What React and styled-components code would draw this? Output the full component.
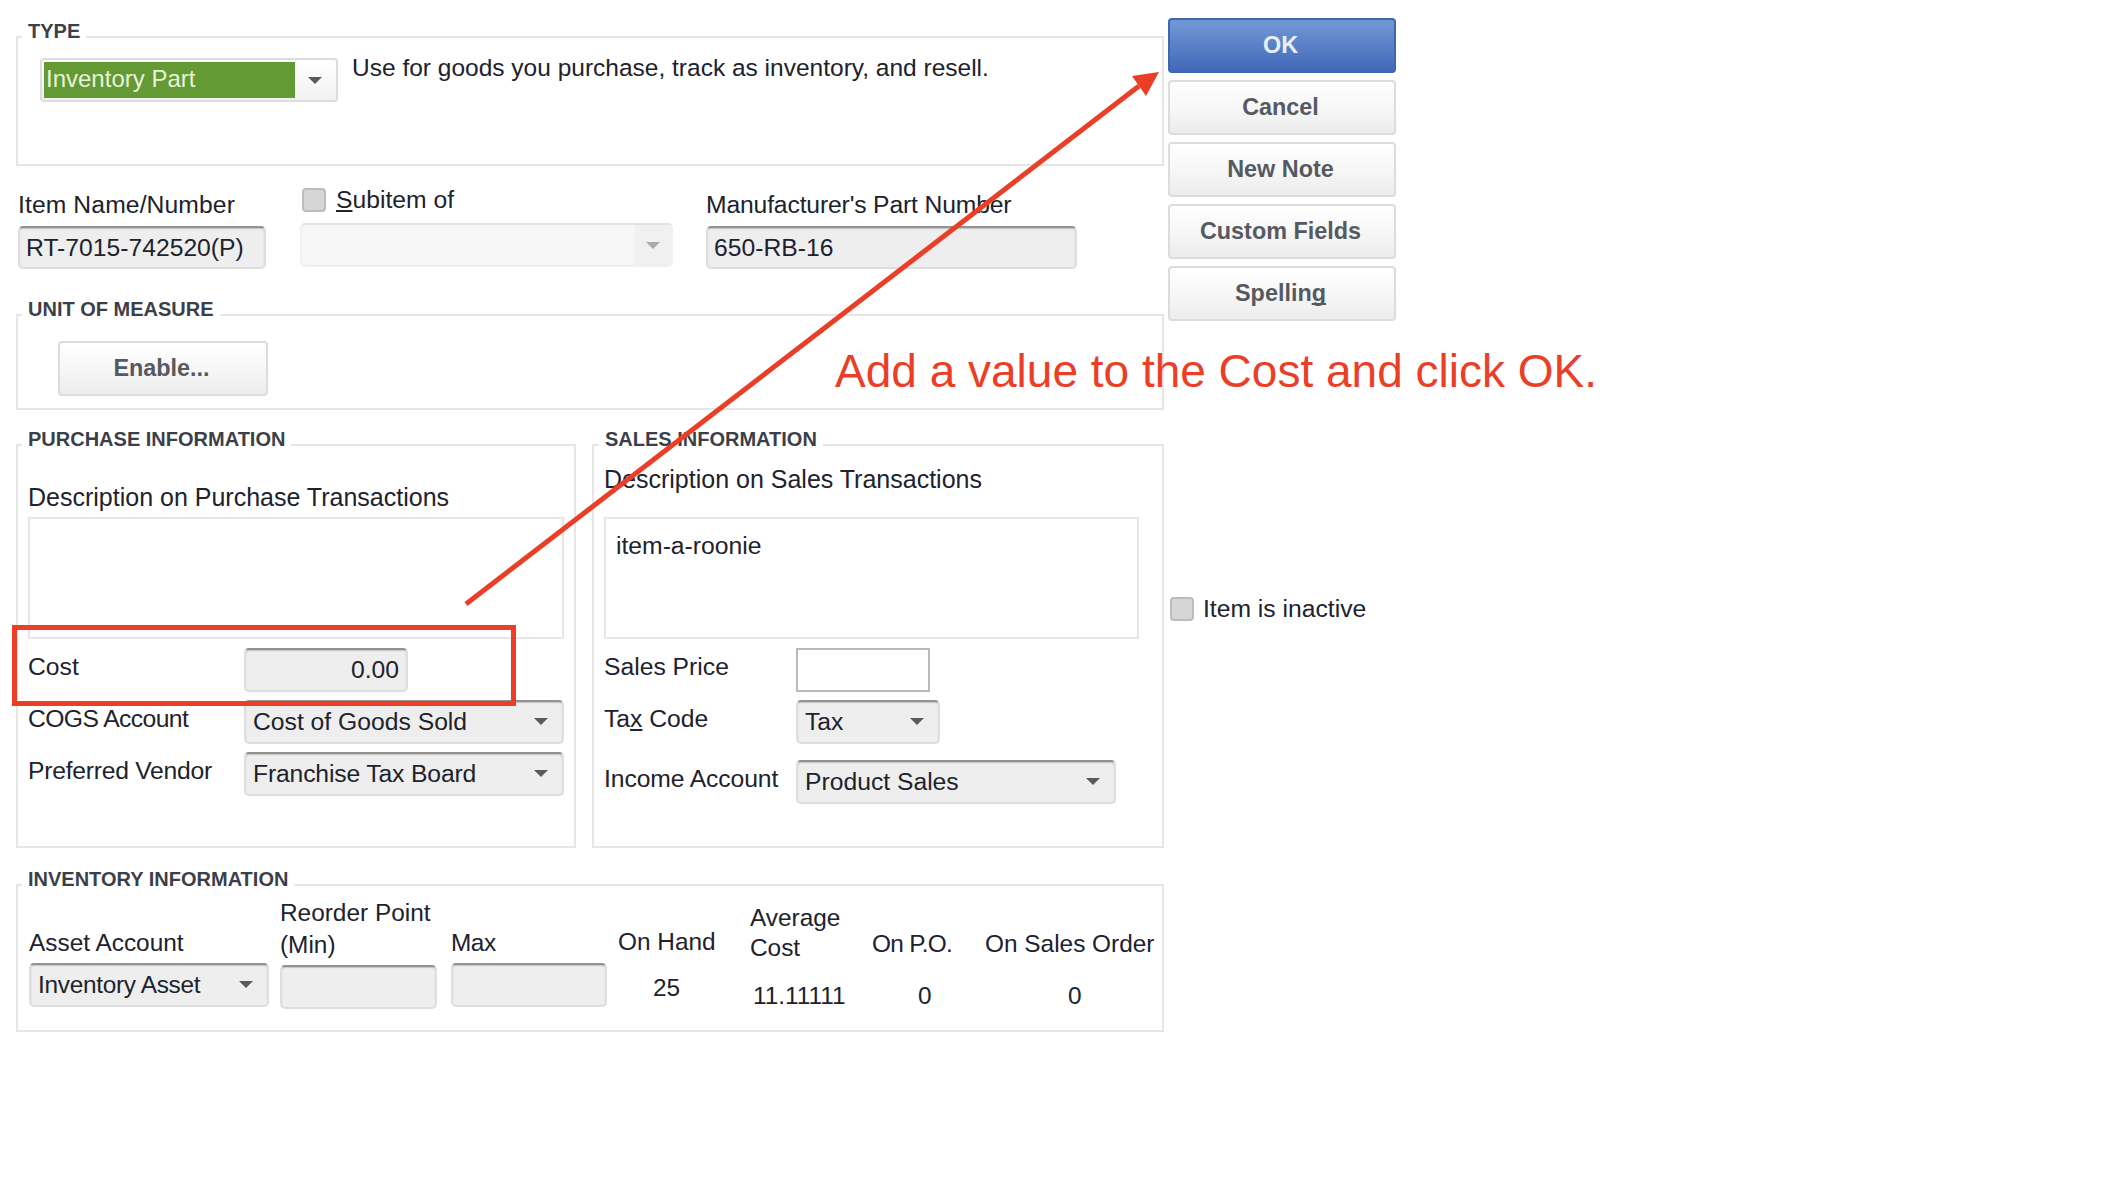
import styled, { createGlobalStyle } from "styled-components";

const GlobalStyle = createGlobalStyle`
  html, body {
    margin: 0;
    background: #ffffff;
  }
  body {
    font-family: "Liberation Sans", Arial, sans-serif;
    font-size: 24.7px;
    color: #20222c;
  }
`;

const ITEM_BUTTONS = [
  { label: "Cancel" },
  { label: "New Note" },
  { label: "Custom Fields" },
  { label: "Spelling", underlineLast: true },
];

export default function App() {
  return (
    <Page>
      <GlobalStyle />

      <FormColumn>
        <Group $height={145}>
          <GroupTitle>TYPE</GroupTitle>
          <TypeRow>
            <TypeSelect>
              <TypeValue>Inventory Part</TypeValue>
              <TypeArrowCell>
                <Arrow />
              </TypeArrowCell>
            </TypeSelect>
            <TypeHint>Use for goods you purchase, track as inventory, and resell.</TypeHint>
          </TypeRow>
        </Group>

        <ItemRow>
          <Field $top={4} $gap={8}>
            <Label $ls={0.1}>Item Name/Number</Label>
            <Sunken $w={248} $h={43}>RT-7015-742520(P)</Sunken>
          </Field>
          <Field $gap={11}>
            <CheckRow>
              <Check />
              <Label>
                <U>S</U>ubitem of
              </Label>
            </CheckRow>
            <DisabledSelect>
              <DisabledArrowCell>
                <Arrow $muted />
              </DisabledArrowCell>
            </DisabledSelect>
          </Field>
          <Field $top={4} $gap={8}>
            <Label $ls={-0.15}>Manufacturer's Part Number</Label>
            <Sunken $w={371} $h={43}>650-RB-16</Sunken>
          </Field>
        </ItemRow>

        <Group $height={111} $mt={30}>
          <GroupTitle>UNIT OF MEASURE</GroupTitle>
          <UnitBody>
            <PlainButton $w={210}>Enable...</PlainButton>
          </UnitBody>
        </Group>

        <InfoRow>
          <Group $height={419} $width={560}>
            <GroupTitle>PURCHASE INFORMATION</GroupTitle>
            <InfoBody>
              <DescLabel $top={23} $bottom={7}>Description on Purchase Transactions</DescLabel>
              <DescBox />
              <FormRow $mt={9}>
                <RowLabel $w={216}>Cost</RowLabel>
                <Sunken $w={164} $h={44} $right>0.00</Sunken>
              </FormRow>
              <FormRow $mt={8}>
                <RowLabel $w={216} $ls={-0.6}>COGS Account</RowLabel>
                <Select $w={320}>
                  Cost of Goods Sold
                  <Arrow />
                </Select>
              </FormRow>
              <FormRow $mt={8}>
                <RowLabel $w={216} $ls={-0.25}>Preferred Vendor</RowLabel>
                <Select $w={320}>
                  <SelectText $ls={-0.15}>Franchise Tax Board</SelectText>
                  <Arrow />
                </Select>
              </FormRow>
            </InfoBody>
          </Group>

          <Group $height={419} $width={572} $ml={1}>
            <GroupTitle $ml={5}>SALES INFORMATION</GroupTitle>
            <InfoBody>
              <DescLabel $top={5} $bottom={25}>Description on Sales Transactions</DescLabel>
              <DescBox $w={535}>item-a-roonie</DescBox>
              <FormRow $mt={9}>
                <RowLabel $w={192}>Sales Price</RowLabel>
                <WhiteInput />
              </FormRow>
              <FormRow $mt={8}>
                <RowLabel $w={192}>
                  Ta<U>x</U> Code
                </RowLabel>
                <Select $w={144}>
                  Tax
                  <Arrow />
                </Select>
              </FormRow>
              <FormRow $mt={16}>
                <RowLabel $w={192} $ls={-0.1}>Income Account</RowLabel>
                <Select $w={320}>
                  Product Sales
                  <Arrow />
                </Select>
              </FormRow>
            </InfoBody>
          </Group>
        </InfoRow>

        <Group $height={163} $mt={21}>
          <GroupTitle>INVENTORY INFORMATION</GroupTitle>
          <StockGrid>
            <StockCol $mb={2} $gap={7}>
              <Label>Asset Account</Label>
              <Select $w={240}>
                <SelectText $ls={-0.3}>Inventory Asset</SelectText>
                <Arrow />
              </Select>
            </StockCol>
            <StockCol $gap={4}>
              <TallLabel>
                Reorder Point
                <br />
                (Min)
              </TallLabel>
              <Sunken $w={157} $h={44} />
            </StockCol>
            <StockCol $mb={2} $gap={7}>
              <Label $ls={-0.5}>Max</Label>
              <Sunken $w={156} $h={44} />
            </StockCol>
            <StockCol $mb={8} $gap={20}>
              <Label>On Hand</Label>
              <StockValue $pl={35}>25</StockValue>
            </StockCol>
            <StockCol $gap={20}>
              <TallLabel $lh={30}>
                Average
                <br />
                Cost
              </TallLabel>
              <StockValue $pl={3}>11.11111</StockValue>
            </StockCol>
            <StockCol $gap={26}>
              <Label $ls={-0.7}>On P.O.</Label>
              <StockValue $pl={46}>0</StockValue>
            </StockCol>
            <StockCol $gap={26}>
              <Label>On Sales Order</Label>
              <StockValue $pl={83}>0</StockValue>
            </StockCol>
          </StockGrid>
        </Group>
      </FormColumn>

      <SideColumn>
        <PrimaryButton>OK</PrimaryButton>
        {ITEM_BUTTONS.map((b) => (
          <PlainButton key={b.label}>
            {b.underlineLast ? (
              <>
                {b.label.slice(0, -1)}
                <U>{b.label.slice(-1)}</U>
              </>
            ) : (
              b.label
            )}
          </PlainButton>
        ))}
        <InactiveRow>
          <Check />
          <Label>Item is inactive</Label>
        </InactiveRow>
      </SideColumn>

      {/* callout drawn on top of the dialog */}
      <Callout>Add a value to the Cost and click OK.</Callout>
      <CalloutArt viewBox="0 0 2116 1182" aria-hidden="true">
        <rect x="14.5" y="627.5" width="499" height="76" fill="none" stroke="#ea3f26" strokeWidth="5" />
        <line x1="466" y1="604" x2="1139" y2="86" stroke="#ea3f26" strokeWidth="5" />
        <polygon points="1159,72 1132,76 1146,96" fill="#ea3f26" />
      </CalloutArt>
    </Page>
  );
}

/* ================= styles ================= */

const Page = styled.div`
  position: relative;
  width: 2116px;
  height: 1182px;
  box-sizing: border-box;
  padding: 18px 0 0 16px;
  display: flex;
  gap: 4px;
  overflow: hidden;
`;

const FormColumn = styled.div`
  width: 1148px;
  padding-top: 3px;
  flex: 0 0 auto;
`;

const Group = styled.fieldset`
  box-sizing: border-box;
  margin: ${(p) => p.$mt || 0}px 0 0 ${(p) => p.$ml || 0}px;
  padding: 0;
  min-width: 0;
  height: ${(p) => p.$height}px;
  width: ${(p) => (p.$width ? `${p.$width}px` : "100%")};
  border: 2px solid #e6e6e6;
`;

const GroupTitle = styled.legend`
  margin-left: ${(p) => p.$ml || 4}px;
  padding: 0 6px 12px;
  font-size: 20px;
  line-height: 20px;
  font-weight: 700;
  color: #3c3f48;
`;

const TypeRow = styled.div`
  display: flex;
  padding: 5px 0 0 22px;
  gap: 14px;
`;

const TypeSelect = styled.div`
  box-sizing: border-box;
  width: 298px;
  height: 44px;
  padding: 2px;
  display: flex;
  background: linear-gradient(#ffffff, #f1f1f1);
  border: 2px solid #dddddd;
  border-radius: 4px;
`;

const TypeValue = styled.div`
  width: 251px;
  padding-left: 2px;
  box-sizing: border-box;
  background: #639a33;
  color: #e8f2da;
  font-size: 24px;
  line-height: 34px;
`;

const TypeArrowCell = styled.div`
  flex: 1;
  display: grid;
  place-items: center;
`;

const TypeHint = styled.div`
  line-height: 20px;
  font-size: 24.5px;
`;

const Arrow = styled.span`
  width: 0;
  height: 0;
  flex: 0 0 auto;
  border-left: 7.5px solid transparent;
  border-right: 7.5px solid transparent;
  border-top: 7px solid ${(p) => (p.$muted ? "#a9a9a9" : "#5a5a5a")};
`;

const ItemRow = styled.div`
  display: grid;
  grid-template-columns: 282px 406px 371px;
  padding: 22px 0 0 2px;
`;

const Field = styled.div`
  display: flex;
  flex-direction: column;
  padding-top: ${(p) => p.$top || 0}px;
  gap: ${(p) => p.$gap}px;
`;

const Label = styled.div`
  line-height: 26px;
  white-space: nowrap;
  letter-spacing: ${(p) => p.$ls || 0}px;
`;

const U = styled.span`
  text-decoration: underline;
  text-decoration-skip-ink: none;
`;

const Sunken = styled.div`
  box-sizing: border-box;
  width: ${(p) => p.$w}px;
  height: ${(p) => p.$h}px;
  padding: 0 ${(p) => (p.$right ? 7 : 6)}px;
  background: #eeeeee;
  border: 2px solid #dedede;
  border-top: 2px solid #929292;
  border-radius: 5px;
  box-shadow: inset 0 1px 1px #c4c4c4;
  line-height: 39px;
  text-align: ${(p) => (p.$right ? "right" : "left")};
  white-space: nowrap;
`;

const CheckRow = styled.div`
  display: flex;
  align-items: center;
  gap: 10px;
  padding-left: 2px;
  height: 24px;
`;

const Check = styled.span`
  box-sizing: border-box;
  width: 24px;
  height: 24px;
  flex: 0 0 auto;
  background: #d6d6d6;
  border: 2px solid #bcbcbc;
  border-radius: 4px;
`;

const DisabledSelect = styled.div`
  box-sizing: border-box;
  width: 373px;
  height: 44px;
  display: flex;
  justify-content: flex-end;
  background: #f6f6f6;
  border: 2px solid #f0f0f0;
  border-top-color: #e2e2e2;
  border-radius: 5px;
`;

const DisabledArrowCell = styled.div`
  width: 36px;
  display: grid;
  place-items: center;
  background: #f0f0f0;
`;

const UnitBody = styled.div`
  padding: 10px 0 0 40px;
`;

const PlainButton = styled.div`
  box-sizing: border-box;
  width: ${(p) => (p.$w ? `${p.$w}px` : "100%")};
  height: 55px;
  padding-right: 3px;
  display: flex;
  align-items: center;
  justify-content: center;
  background: linear-gradient(#ffffff, #f6f6f6 55%, #ececec);
  border: 2px solid #dcdcdc;
  border-radius: 4px;
  color: #565a60;
  font-size: 23.4px;
  font-weight: 700;
`;

const PrimaryButton = styled(PlainButton)`
  background: linear-gradient(#7299d6, #4268b9);
  border-color: #3f66ae;
  color: #e9eff8;
`;

const InfoRow = styled.div`
  display: flex;
  gap: 15px;
  margin-top: 19px;
`;

const InfoBody = styled.div`
  padding-left: 10px;
`;

const DescLabel = styled.div`
  font-size: 25px;
  line-height: 26px;
  padding: ${(p) => p.$top}px 0 ${(p) => p.$bottom}px;
  white-space: nowrap;
`;

const DescBox = styled.div`
  box-sizing: border-box;
  width: ${(p) => p.$w || 536}px;
  height: 122px;
  padding: 13px 10px;
  border: 2px solid #e6e6e6;
  line-height: 28px;
`;

const FormRow = styled.div`
  display: flex;
  align-items: center;
  margin-top: ${(p) => p.$mt}px;
`;

const RowLabel = styled.div`
  width: ${(p) => p.$w}px;
  flex: 0 0 auto;
  margin-bottom: 6px;
  line-height: 26px;
  white-space: nowrap;
  letter-spacing: ${(p) => p.$ls || 0}px;
`;

const Select = styled.div`
  box-sizing: border-box;
  width: ${(p) => p.$w}px;
  height: 44px;
  padding: 0 14px 1px 7px;
  display: flex;
  align-items: center;
  justify-content: space-between;
  background: #eeeeee;
  border: 2px solid #dedede;
  border-top: 2px solid #929292;
  border-radius: 5px;
  box-shadow: inset 0 1px 1px #c4c4c4;
  white-space: nowrap;
`;

const SelectText = styled.span`
  letter-spacing: ${(p) => p.$ls}px;
`;

const WhiteInput = styled.div`
  box-sizing: border-box;
  width: 134px;
  height: 44px;
  background: #ffffff;
  border: 2px solid #b8b8b8;
`;

const StockGrid = styled.div`
  display: grid;
  grid-template-columns: 251px 171px 167px 132px 122px 113px 168px;
  align-items: end;
  height: 116px;
  margin-top: -8px;
  padding-left: 11px;
  font-size: 24.4px;
`;

const StockCol = styled.div`
  display: flex;
  flex-direction: column;
  gap: ${(p) => p.$gap}px;
  margin-bottom: ${(p) => p.$mb || 0}px;
`;

const TallLabel = styled.div`
  line-height: ${(p) => p.$lh || 32}px;
  white-space: nowrap;
`;

const StockValue = styled.div`
  line-height: 26px;
  padding-left: ${(p) => p.$pl}px;
`;

const SideColumn = styled.div`
  width: 228px;
  display: flex;
  flex-direction: column;
  gap: 7px;
  flex: 0 0 auto;
`;

const InactiveRow = styled.div`
  display: flex;
  align-items: center;
  gap: 9px;
  margin-top: 268px;
  padding-left: 2px;
`;

const Callout = styled.div`
  position: absolute;
  left: 835px;
  top: 343px;
  font-size: 46px;
  line-height: 56px;
  color: #ea3f26;
  white-space: nowrap;
`;

const CalloutArt = styled.svg`
  position: absolute;
  inset: 0;
  width: 2116px;
  height: 1182px;
  pointer-events: none;
`;
